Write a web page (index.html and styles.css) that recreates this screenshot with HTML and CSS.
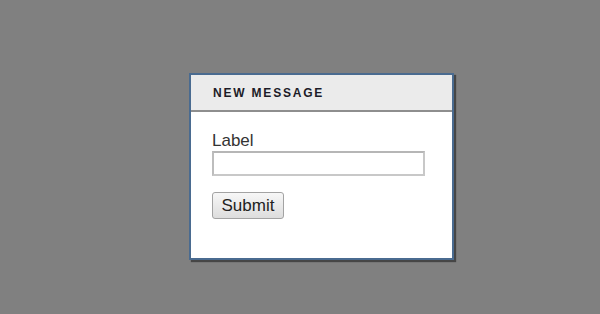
FILE: index.html
```html
<!DOCTYPE html>
<html>
<head>
<meta charset="utf-8">
<link rel="stylesheet" href="styles.css">
</head>
<body>
<div class="card">
  <div class="card-header">NEW MESSAGE</div>
  <form class="card-body">
    <label class="field-label" for="f">Label</label>
    <input class="field-input" id="f" type="text">
    <button class="submit" type="button">Submit</button>
  </form>
</div>
</body>
</html>
```
FILE: styles.css
```css
html, body {
  margin: 0;
  padding: 0;
  background: #808080;
  font-family: "Liberation Sans", Arial, sans-serif;
}
body {
  padding-top: 73px;
  padding-left: 189px;
  height: 314px;
  box-sizing: border-box;
}
.card {
  width: 265px;
  height: 187px;
  box-sizing: border-box;
  background: #ffffff;
  border: 2px solid #4a6b90;
  box-shadow: 2px 2px 1px rgba(0, 0, 0, 0.45);
}
.card-header {
  height: 35px;
  line-height: 36px;
  background: #ebebeb;
  border-bottom: 2px solid #8e8e8e;
  padding-left: 22px;
  font-size: 12px;
  font-weight: bold;
  letter-spacing: 1.8px;
  color: #1c1c28;
}
.card-body {
  display: flex;
  flex-direction: column;
  align-items: flex-start;
  padding: 19px 0 0 21px;
  margin: 0;
}
.field-label {
  display: block;
  font-size: 17px;
  line-height: 20px;
  color: #333333;
}
.field-input {
  width: 213px;
  height: 25px;
  box-sizing: border-box;
  margin: 0;
  border: 2px solid #c8c8c8;
  border-top-color: #b6b6b6;
  border-left-color: #bdbdbd;
  background: #ffffff;
  font-size: 14px;
  outline: none;
}
.submit {
  margin-top: 16px;
  width: 72px;
  height: 27px;
  box-sizing: border-box;
  padding: 0;
  font-family: "Liberation Sans", Arial, sans-serif;
  font-size: 17px;
  color: #222222;
  background: linear-gradient(#f7f7f7, #dddddd);
  border: 1px solid #a3a3a3;
  border-radius: 3px;
}
```
